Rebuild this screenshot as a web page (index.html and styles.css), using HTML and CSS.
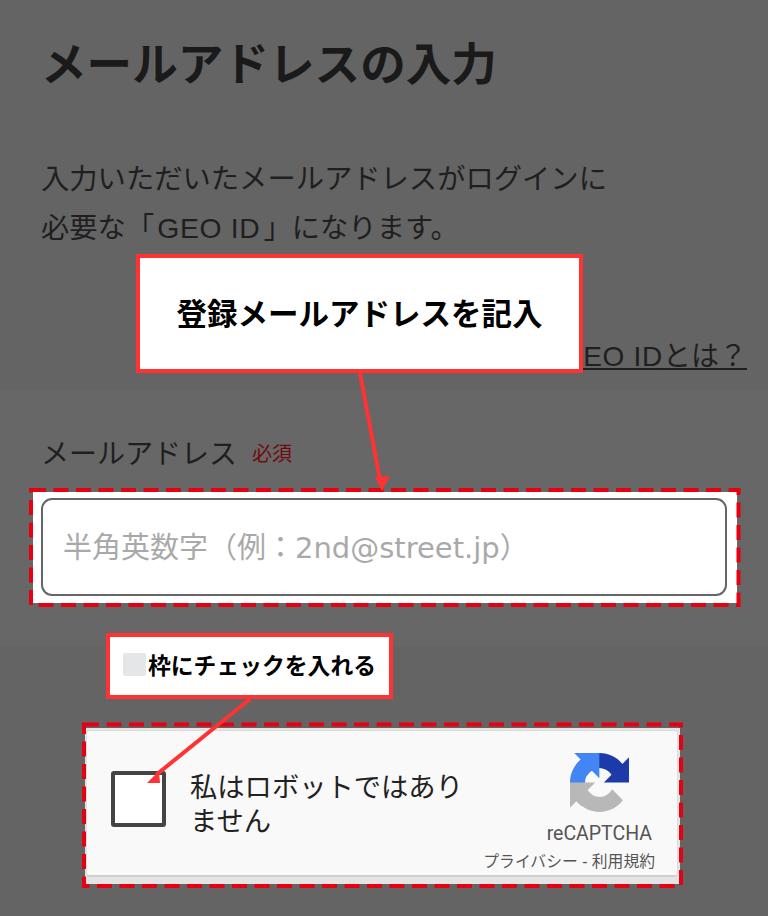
FILE: index.html
```html
<!DOCTYPE html>
<html lang="ja">
<head>
    <meta charset="UTF-8">
    <meta name="viewport" content="width=device-width, initial-scale=1.0">
    <title>メールアドレスの入力</title>
    <link rel="stylesheet" href="styles.css">
</head>
<body>
    <div class="page">
        <section class="intro">
            <h1 class="page-title">メールアドレスの入力</h1>
            <p class="lead">入力いただいたメールアドレスがログインに<br>必要な「<span class="latin">GEO ID</span>」になります。</p>
            <div class="help-row"><a class="help-link" href="#"><span class="latin">GEO ID</span>とは？</a></div>
        </section>

        <section class="email-section">
            <div class="field-label">
                <span class="label-text">メールアドレス</span>
                <span class="required">必須</span>
            </div>
            <div class="email-highlight">
                <input class="email-input" type="text" placeholder="半角英数字（例：2nd@street.jp）">
            </div>
        </section>

        <section class="captcha-section">
            <div class="captcha-highlight">
                <div class="captcha-card">
                    <div class="captcha-check"></div>
                    <div class="captcha-text">私はロボットではあり<br>ません</div>
                    <div class="captcha-brand">
                        <svg class="captcha-logo" viewBox="0 0 64 64" aria-hidden="true">
                            <path d="M64 31.955l-.033-1.37V4.687l-7.16 7.16C50.948 4.674 42.033.093 32.05.093c-10.4 0-19.622 4.96-25.458 12.64l11.736 11.86a15.55 15.55 0 0 1 4.754-5.334c2.05-1.6 4.952-2.906 8.968-2.906.485 0 .86.057 1.135.163 4.976.393 9.29 3.14 11.83 7.125l-8.307 8.307 26.3.001" fill="#1c3aa9"/>
                            <path d="M31.862.094l-1.37.033H4.594l7.16 7.16C4.58 13.147 0 22.06 0 32.046c0 10.4 4.96 19.622 12.64 25.458L24.5 45.768a15.55 15.55 0 0 1-5.334-4.754c-1.6-2.05-2.906-4.952-2.906-8.968 0-.485.057-.86.163-1.135.393-4.976 3.14-9.29 7.125-11.83l8.307 8.307.001-26.3" fill="#4285f4"/>
                            <path d="M.001 32.045l.033 1.37v25.898l7.16-7.16c5.86 7.173 14.774 11.754 24.76 11.754 10.4 0 19.622-4.96 25.458-12.64L45.677 39.407a15.55 15.55 0 0 1-4.754 5.334c-2.05 1.6-4.952 2.906-8.968 2.906-.485 0-.86-.057-1.135-.163-4.976-.393-9.29-3.14-11.83-7.125l8.307-8.307-26.3-.001" fill="#b8b8b8"/>
                        </svg>
                        <div class="captcha-name">reCAPTCHA</div>
                        <div class="captcha-links">プライバシー - 利用規約</div>
                    </div>
                </div>
            </div>
        </section>

        <!-- annotations drawn over the screenshot -->
        <svg class="marks" viewBox="0 0 768 916" aria-hidden="true">
            <rect class="dash" x="31" y="490" width="707.5" height="115"/>
            <rect class="dash" x="84" y="724.5" width="597" height="161.5"/>
            <line class="arrow" x1="360" y1="373" x2="380" y2="480"/>
            <polygon class="arrow-head" points="382,491 375,477 390,476"/>
            <line class="arrow" x1="250" y1="699" x2="156" y2="775"/>
            <polygon class="arrow-head" points="147,783 159,771 160,783"/>
        </svg>
        <div class="note note-email">登録メールアドレスを記入</div>
        <div class="note note-check"><span class="note-box"></span>枠にチェックを入れる</div>
    </div>
</body>
</html>
```

FILE: styles.css
```css
body {
    margin: 0;
    font-family: "Liberation Sans", "Noto Sans CJK JP", sans-serif;
    color: #1f1f1f;
    background-color: #646464;
    overflow: hidden;
}

.page {
    position: relative;
    width: 768px;
    height: 916px;
    overflow: hidden;
}

/* top block */
.intro {
    height: 390px;
    padding: 36px 21px 0 41px;
    box-sizing: border-box;
    background-color: #646464;
}

.page-title {
    margin: 0;
    font-size: 45.6px;
    line-height: 60px;
    font-weight: 700;
    color: #1a1a1a;
}

.lead {
    margin: 59px 0 0;
    font-size: 28.3px;
    line-height: 49px;
}

.latin {
    letter-spacing: 0.7px;
}

.lead .latin {
    padding: 0 3px;
}

.help-row {
    margin-top: 79px;
    text-align: right;
}

.help-link {
    color: #1f1f1f;
    font-size: 28px;
    line-height: 49px;
}

/* email field */
.email-section {
    height: 256px;
    padding-top: 38px;
    box-sizing: border-box;
    background-color: #676767;
}

.field-label {
    display: flex;
    align-items: center;
    gap: 15px;
    height: 48px;
    margin-left: 41px;
}

.label-text {
    font-size: 28px;
}

.required {
    font-size: 20px;
    color: #6e0b0f;
}

.email-highlight {
    width: 704px;
    height: 111px;
    margin: 16px 0 0 33px;
    padding: 6px 10px 7px 8px;
    box-sizing: border-box;
    background-color: #fff;
}

.email-input {
    display: block;
    width: 100%;
    height: 98px;
    padding: 2px 20px 0;
    box-sizing: border-box;
    border: 2px solid #666;
    border-radius: 11px;
    background-color: #fff;
    font-family: "DejaVu Sans", "Noto Sans CJK JP", sans-serif;
    font-size: 29px;
}

.email-input::placeholder {
    color: #a9a9a9;
    opacity: 1;
}

/* recaptcha */
.captcha-section {
    height: 270px;
    padding-top: 82px;
    box-sizing: border-box;
    background-color: #646464;
}

.captcha-highlight {
    width: 595px;
    height: 156px;
    margin-left: 85px;
    padding: 2px 2px 7px 1px;
    box-sizing: border-box;
    background-color: #e4e4e4;
}

.captcha-card {
    display: flex;
    align-items: flex-start;
    height: 100%;
    box-sizing: border-box;
    border: 1px solid #dedede;
    border-bottom: 2px solid #cfcfcf;
    border-radius: 4px;
    background-color: #f9f9f9;
}

.captcha-check {
    flex: none;
    width: 55px;
    height: 56px;
    margin: 40px 0 0 24px;
    box-sizing: border-box;
    border: 4px solid #444;
    border-radius: 3px;
    background-color: #fff;
}

.captcha-text {
    margin: 40px 0 0 24px;
    font-size: 27.3px;
    line-height: 34px;
    color: #222;
}

.captcha-brand {
    display: flex;
    flex-direction: column;
    align-items: flex-end;
    margin: 22px 22px 0 auto;
}

.captcha-logo {
    width: 59px;
    height: 59px;
    margin-right: 26px;
}

.captcha-name {
    margin: 9px 3px 0 0;
    font-family: Roboto, "Liberation Sans", sans-serif;
    font-size: 19.5px;
    line-height: 26px;
    color: #555;
}

.captcha-links {
    margin-top: 4px;
    font-size: 15.8px;
    line-height: 22px;
    color: #555;
    white-space: nowrap;
}

/* red annotations */
.marks {
    position: absolute;
    top: 0;
    left: 0;
    width: 768px;
    height: 916px;
}

.dash {
    fill: none;
    stroke: #e60012;
    stroke-width: 4;
    stroke-dasharray: 15 7.5;
}

.arrow {
    stroke: #ff3333;
    stroke-width: 4;
}

.arrow-head {
    fill: #ff3333;
}

.note {
    position: absolute;
    display: flex;
    align-items: center;
    justify-content: center;
    box-sizing: border-box;
    padding-bottom: 4px;
    border: 4px solid #ff3333;
    background-color: #fff;
    color: #000;
    font-weight: 700;
}

.note-email {
    top: 254px;
    left: 136px;
    width: 447px;
    height: 119px;
    font-size: 30.5px;
}

.note-check {
    top: 633px;
    left: 106px;
    width: 287px;
    height: 66px;
    font-size: 22.8px;
}

.note-box {
    width: 23px;
    height: 23px;
    margin-right: 2px;
    border-radius: 2px;
    background-color: #e5e6e8;
}
```
